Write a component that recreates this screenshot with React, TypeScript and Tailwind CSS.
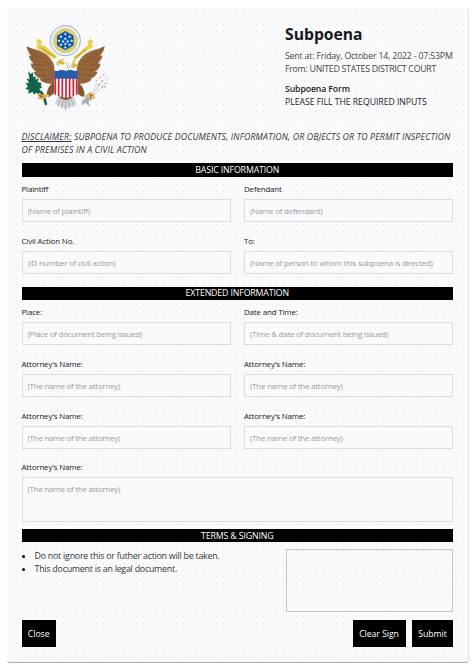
import React from "react";

function Seal() {
  const star = (x: number, y: number) => (
    <path
      key={x + "-" + y}
      d={`M${x} ${y - 4.5}l1.4 2.8 3.1.4-2.2 2.2.5 3.1-2.8-1.5-2.8 1.5.5-3.1-2.2-2.2 3.1-.4z`}
      fill="#e8f4fb"
    />
  );
  const stars = [
    [150, 57], [137, 65], [150, 71], [163, 65], [131, 77], [143, 79], [157, 79],
    [169, 77], [137, 89], [150, 87], [163, 89], [150, 97],
  ];
  const wing = (
    <g>
      <path
        d="M34 93C38 96 52 101 65 105C88 113 108 128 115 147C119 159 118 190 118 200L117 226L112 207C94 207 78 201 72 193L78 191C66 188 57 179 55 170L63 171C51 163 46 152 47 145L55 147C46 138 40 128 41 121L49 124C41 116 34 102 34 93Z"
        fill="#94643b"
      />
      <path
        d="M40 101Q62 119 92 119M45 114Q65 130 94 128M50 129Q70 142 98 139M54 145Q74 155 102 149M62 164Q80 169 106 160M72 181Q92 184 112 173M84 195Q102 197 116 187"
        fill="none"
        stroke="#815229"
        strokeWidth="2.4"
      />
      <path
        d="M54 104Q87 108 103 127M65 113Q94 120 107 143M76 136Q91 145 99 166M81 151L98 180"
        fill="none"
        stroke="#a87848"
        strokeWidth="2"
      />
      <path d="M116 204C103 207 95 222 94 241L101 246L124 230Z" fill="#86552d" />
    </g>
  );
  return (
    <svg viewBox="20 30 262 262" className="block h-[87.3px] w-[87.3px]" role="img" aria-label="United States seal">
      {wing}
      <g transform="translate(302 0) scale(-1 1)">{wing}</g>
      <path d="M139 166L145 143L157 138L166 144L160 151L162 169Z" fill="#f7f7f5" />
      <path d="M154 142L157 159M164 151L158 168" stroke="#9a9a9a" strokeWidth="2" />
      <path d="M121 145L134 132L147 133L142 140L151 143L143 150L133 147L127 155ZM167 158Q169 136 178 132L183 139L177 144L190 150L178 160Z" fill="#e7ca63" />
      <path d="M130 140L145 145M172 151L181 152" stroke="#aa7924" strokeWidth="2" />
      <circle cx="150" cy="77" r="45.5" fill="#fafafc" stroke="#8fa9d5" strokeWidth="2.8" />
      <circle cx="150" cy="77" r="41.5" fill="none" stroke="#d0ddef" strokeWidth="2" />
      <circle cx="150" cy="77" r="36" fill="#dfcc62" stroke="#c3b56a" strokeWidth="2" />
      <circle cx="150" cy="77" r="32" fill="none" stroke="#f1e69b" strokeWidth="2" strokeDasharray="3 3" />
      <path d="M150 48L175 62V91L150 106L125 91V62Z" fill="#1459a7" />
      {stars.map(([x, y]) => star(x, y))}
      <g>
        <path d="M65 72L77 75L81 83L75 89L91 94L108 110L125 123L119 132L103 124L82 109L66 101L62 93L70 89L63 82Z" fill="#ead14c" />
        <path d="M78 98L97 112L119 126" fill="none" stroke="#766532" strokeWidth="3" strokeDasharray="3 2" />
        <path d="M227 71L234 80L227 88L234 94L225 101L208 111L191 126L178 134L174 125L189 116L204 101L220 89L216 80Z" fill="#ead14c" />
        <path d="M180 129L196 116L213 102" fill="none" stroke="#766532" strokeWidth="3" strokeDasharray="3 2" />
      </g>
      <path d="M132 236L117 270L126 266L126 277L135 272L138 283L145 276L151 288L157 276L165 282L166 273L177 277L177 268L186 269L171 236Z" fill="#d3d4d9" />
      <path d="M137 247L128 273M144 248L140 278M151 246V284M158 248L163 278M165 247L176 274" stroke="#93949c" strokeWidth="2" />
      <path d="M121 238L181 238L165 251L151 255L136 250Z" fill="#82532e" />
      <path d="M117 188H187V238Q174 246 152 248Q130 246 117 238Z" fill="#fff" />
      <path d="M120 188V239M130 188V243M141 188V246M152 188V248M163 188V246M174 188V243M184 188V239" stroke="#cf243d" strokeWidth="5.2" />
      <path d="M117 167L128 168L136 164L152 167L168 164L177 168L187 167V191H117Z" fill="#285caa" />
      <g fill="#12664c">
        <path d="M38 168L46 177L53 172L54 186L62 185L60 194L70 190L67 201L79 204L73 213L82 216L72 222L76 230L63 228L57 239L52 230L39 236L40 224L30 222L38 214L30 203L41 205L34 190L43 193Z" />
        <path d="M50 201L59 211L78 207L76 216L65 220L82 230L92 251L96 268L90 272L82 249L65 234L54 236Z" />
      </g>
      <path d="M43 182L55 211L80 238L90 263M35 209L53 215M52 229L61 217" fill="none" stroke="#07503b" strokeWidth="2" />
      <path d="M64 238L74 233L79 239L97 237L103 243L89 248L84 257L77 252L66 253L71 245ZM215 238L226 230L230 237L241 236L235 244L242 250L231 251L228 260L220 249L204 246Z" fill="#dfb960" />
      <path d="M70 242L87 246M78 236L76 250M221 240L235 243M227 234L225 252" stroke="#a36c29" strokeWidth="3" />
      <path d="M224 238L201 256L197 270L211 265L225 275L220 258Z" fill="#b9bbc2" />
      <path d="M205 264L217 250M214 266L223 249" stroke="#777983" strokeWidth="2" />
      <path d="M228 236L245 203M231 239L255 207M234 240L265 215M232 236L263 193" stroke="#c4c6ce" strokeWidth="2" />
      <path d="M242 199l5-5M252 189l5-3M263 181l4-5M248 211l6-4M259 200l5-5M270 189l4-4M258 217l6-3M268 207l6-3M277 196l2-3M267 217l5-3" stroke="#8e909b" strokeWidth="3" />
    </svg>
  );
}

function SectionTitle({ children }: { children: React.ReactNode }) {
  return (
    <h2 className="flex h-[13.3px] items-center justify-center bg-black pt-[0.5px] text-[8.8px] leading-none tracking-[-0.15px] text-white">
      {children}
    </h2>
  );
}

function Field({ label, hint, area = false }: { label: string; hint: string; area?: boolean }) {
  const box =
    "block w-full resize-none rounded-none border border-[#d9dde3] bg-[#f9fafc] px-[5px] text-[8px] tracking-[-0.26px] text-gray-700 outline-none placeholder:text-[#989ca6]";
  return (
    <label className="block">
      <span className="block h-[16px] text-[7.9px] leading-[12px] font-medium tracking-[-0.14px] text-[#17181d]">{label}</span>
      {area ? (
        <textarea placeholder={hint} className={box + " h-[45px] pt-[5px] leading-[12px]"} />
      ) : (
        <input placeholder={hint} className={box + " h-[23px]"} />
      )}
    </label>
  );
}

const action = "h-[26.6px] bg-black pt-[1px] text-[8.7px] tracking-[-0.05px] text-white";

export default function App() {
  return (
    <main className="h-[667px] w-[474px] overflow-hidden bg-white pt-[8px] pl-[7px] font-['Open_Sans','Noto_Sans',sans-serif]">
      <form
        onSubmit={(e) => e.preventDefault()}
        className="h-[654.5px] w-[462px] rounded-[3px] border-r border-b border-r-[#e3e3e6] border-b-[#b5aaaa] bg-[#fafafc] bg-[radial-gradient(circle_at_center,#dcdde4_0.6px,transparent_0.8px)] bg-[size:6.667px_6.667px] pr-[15px] pl-[14.5px]"
      >
        <header className="flex h-[123px] justify-between pt-[17px]">
          <Seal />
          <div className="w-[168px] whitespace-nowrap text-[#45464b]">
            <h1 className="text-[15.7px] leading-[18px] font-bold text-[#17181c]">Subpoena</h1>
            <div className="mt-[7px] text-[8.8px] leading-[13.3px] tracking-[-0.2px]">
              <p>Sent at: Friday, October 14, 2022 - 07:53PM</p>
              <p className="tracking-[-0.27px]">From: UNITED STATES DISTRICT COURT</p>
            </div>
            <div className="mt-[6.5px] text-[8.7px] leading-[13.3px] tracking-[-0.04px] text-[#202126]">
              <p className="font-semibold tracking-[-0.1px]">Subpoena Form</p>
              <p>PLEASE FILL THE REQUIRED INPUTS</p>
            </div>
          </div>
        </header>
        <p className="h-[32.3px] text-[8.8px] leading-[13.3px] tracking-[0.13px] whitespace-nowrap text-[#35363b] italic">
          <span className="underline">DISCLAIMER:</span> SUBPOENA TO PRODUCE DOCUMENTS, INFORMATION, OR OBJECTS OR TO PERMIT INSPECTION
          <br />
          OF PREMISES IN A CIVIL ACTION
        </p>
        <SectionTitle>BASIC INFORMATION</SectionTitle>
        <div className="grid h-[110px] grid-cols-2 content-start gap-x-[13.5px] gap-y-[12.7px] pt-[6.3px]">
          <Field label="Plaintiff" hint="(Name of plaintiff)" />
          <Field label="Defendant" hint="(Name of defendant)" />
          <Field label="Civil Action No." hint="(ID number of civil action)" />
          <Field label="To:" hint="(Name of person to whom this subpoena is directed)" />
        </div>
        <SectionTitle>EXTENDED INFORMATION</SectionTitle>
        <div className="grid h-[229.2px] grid-cols-2 content-start gap-x-[13.5px] gap-y-[12.7px] pt-[6.3px]">
          <Field label="Place:" hint="(Place of document being issued)" />
          <Field label="Date and Time:" hint="(Time & date of document being issued)" />
          <Field label="Attorney's Name:" hint="(The name of the attorney)" />
          <Field label="Attorney's Name:" hint="(The name of the attorney)" />
          <Field label="Attorney's Name:" hint="(The name of the attorney)" />
          <Field label="Attorney's Name:" hint="(The name of the attorney)" />
          <div className="col-span-2">
            <Field label="Attorney's Name:" hint="(The name of the attorney)" area />
          </div>
        </div>
        <SectionTitle>TERMS &amp; SIGNING</SectionTitle>
        <div className="flex justify-between pt-[6.5px]">
          <ul className="list-disc pl-[13px] text-[8.9px] leading-[13.3px] tracking-[-0.25px] text-[#35363b] marker:text-black">
            <li>Do not ignore this or futher action will be taken.</li>
            <li>This document is an legal document.</li>
          </ul>
          <div className="h-[63px] w-[167px] border border-[#c5c5c9]" />
        </div>
        <div className="mt-[8.5px] flex">
          <button type="button" className={action + " w-[34.3px]"}>Close</button>
          <button type="button" className={action + " mr-[6.5px] ml-auto w-[53px]"}>Clear Sign</button>
          <button type="submit" className={action + " w-[41px]"}>Submit</button>
        </div>
      </form>
    </main>
  );
}
